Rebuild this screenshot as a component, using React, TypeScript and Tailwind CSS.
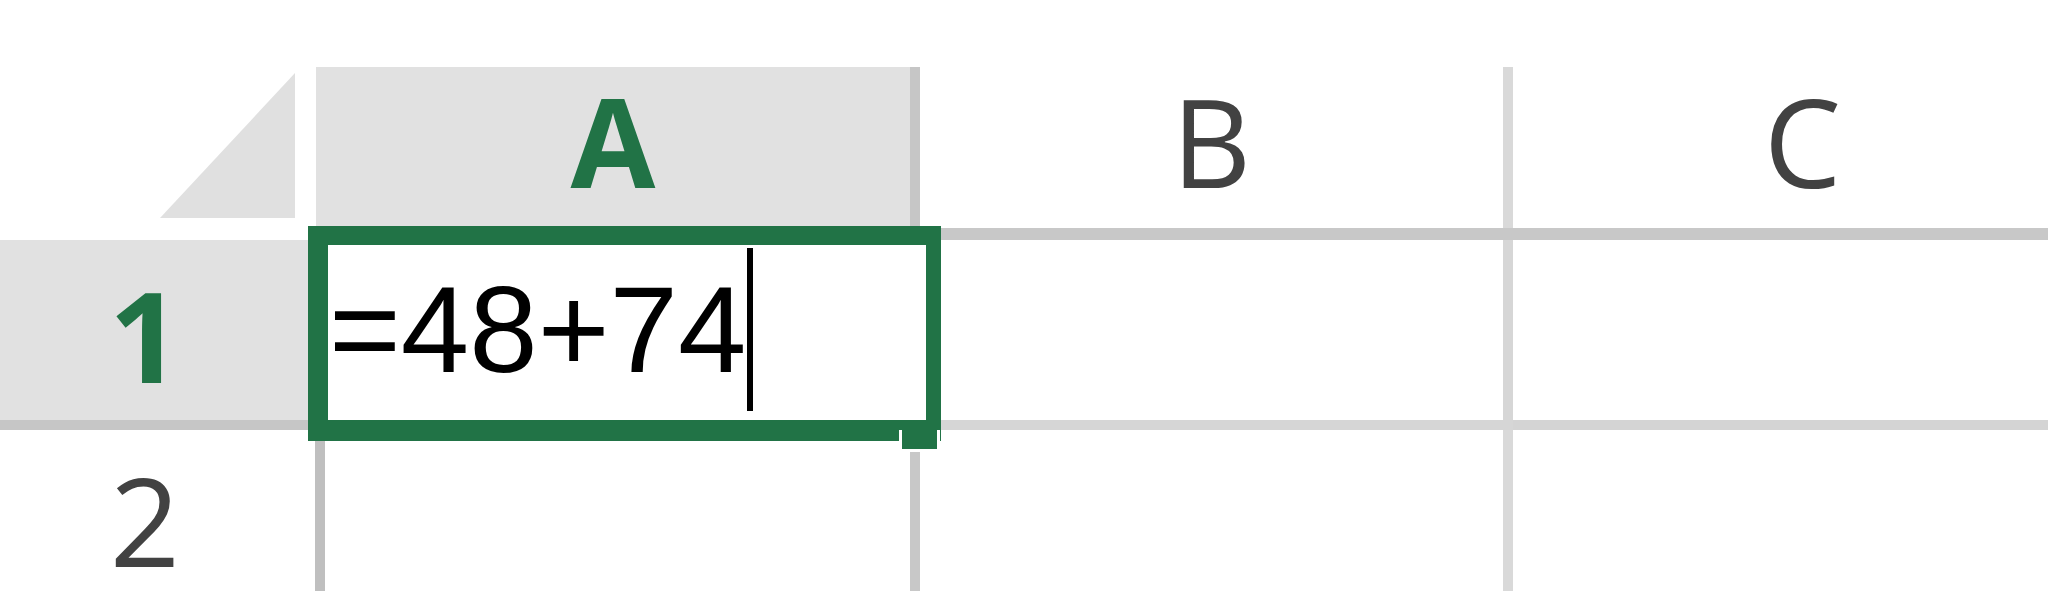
import React from 'react';

const green = 'text-[#217346]';

const App: React.FC = () => {
  return (
    <div className="relative w-[2048px] h-[591px] overflow-hidden bg-white [font-family:'Open_Sans',sans-serif]">
      <div className="h-[67px]" />

      {/* Column headers */}
      <div className="flex h-[173px]">
        <div className="w-[316px] h-[161px] relative">
          <svg className="absolute left-0 top-0" width="316" height="161" viewBox="0 0 316 161">
            <polygon points="295,6 160,151 295,151" fill="#e0e0e0" />
          </svg>
        </div>
        <div className="w-[604px] flex flex-col">
          <div className="h-[161px] bg-[#e1e1e1] border-r-[10px] border-[#c6c6c6] flex justify-center">
            <span className={`pt-[12px] leading-none text-[123px] font-bold ${green}`}>A</span>
          </div>
          <div className="flex-1 bg-[#c6c6c6]" />
        </div>
        <div className="w-[593px] flex flex-col">
          <div className="h-[161px] border-r-[10px] border-[#d9d9d9] flex justify-center">
            <span className="pt-[12px] leading-none text-[123px] text-[#424242]">B</span>
          </div>
          <div className="flex-1 bg-[#c8c8c8]" />
        </div>
        <div className="flex-1 flex flex-col">
          <div className="h-[161px] flex justify-center">
            <span className="pt-[12px] pl-[44px] leading-none text-[123px] text-[#424242]">C</span>
          </div>
          <div className="flex-1 bg-[#c8c8c8]" />
        </div>
      </div>

      {/* Row 1 */}
      <div className="flex h-[190px]">
        <div className="w-[316px] flex flex-col">
          <div className="flex-1 bg-[#e1e1e1]">
            <div className={`w-[290px] text-center pt-[31px] leading-none text-[126px] font-bold ${green}`}>1</div>
          </div>
          <div className="h-[10px] bg-[#c6c6c6]" />
        </div>
        <div className="w-[604px] border-r-[10px] border-b-[10px] border-[#d4d4d4]" />
        <div className="w-[593px] border-r-[10px] border-b-[10px] border-[#d6d6d6]" />
        <div className="flex-1 border-b-[10px] border-[#d4d4d4]" />
      </div>

      {/* Row 2 */}
      <div className="flex h-[161px]">
        <div className="w-[325px] border-r-[10px] border-[#bfbfbf]">
          <div className="w-[290px] text-center pt-[45px] leading-[90px] text-[123px] text-[#424242]">2</div>
        </div>
        <div className="w-[595px] border-r-[10px] border-[#c8c8c8]" />
        <div className="w-[593px] border-r-[10px] border-[#d9d9d9]" />
        <div className="flex-1" />
      </div>

      {/* Active cell selection */}
      <div className="absolute left-[308px] top-[226px] w-[633px] h-[215px] border-l-[20px] border-t-[19px] border-r-[15px] border-b-[21px] border-[#217346] bg-white">
        <div className="flex items-start pl-[1px] [font-family:'Liberation_Sans',Arial,sans-serif]">
          <span className="mt-[23px] leading-[123px] text-[123px] text-black">=48+74</span>
          <span className="mt-[3px] ml-[1px] w-[6px] h-[163px] bg-black" />
        </div>
      </div>
      <div className="absolute left-[899px] top-[430px] w-[41px] h-[22px] bg-[#217346] border-l-[3px] border-r-[3px] border-b-[3px] border-white" />
    </div>
  );
};

export default App;
